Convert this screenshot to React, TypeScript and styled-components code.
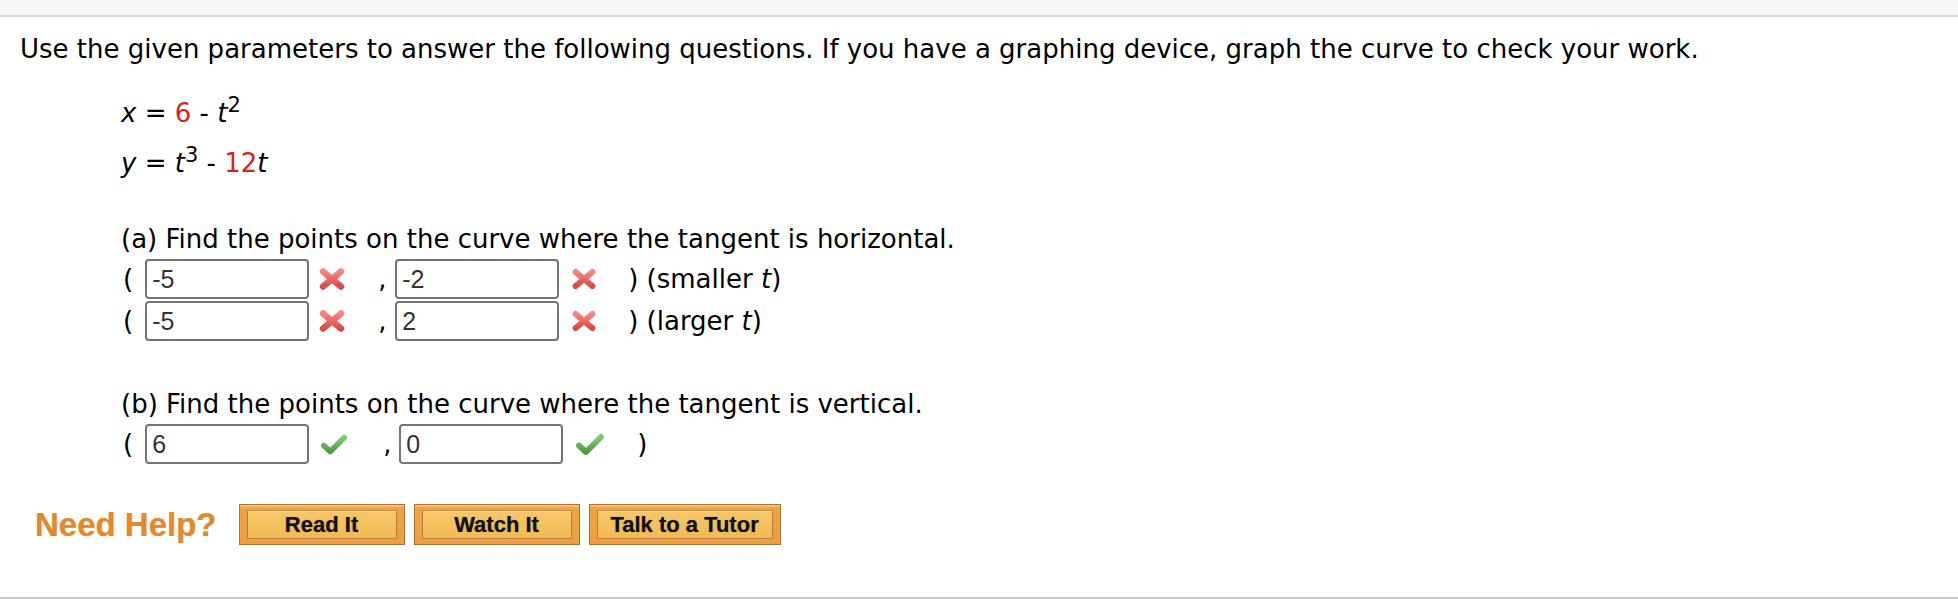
import React from "react";
import styled, { createGlobalStyle } from "styled-components";

const GlobalStyle = createGlobalStyle`
  html, body {
    margin: 0;
    padding: 0;
    background: #ffffff;
  }
  body {
    font-family: "DejaVu Sans", Verdana, sans-serif;
    color: #000;
  }
`;

const Page = styled.div`
  width: 1958px;
  height: 606px;
  background: #fff;
  display: flex;
  flex-direction: column;
`;

const TopBand = styled.div`
  height: 15px;
  background: #f6f6f6;
  border-bottom: 2px solid #dedede;
`;

const Body = styled.div`
  flex: 1;
  padding: 17px 20px 0;
  border-bottom: 2px solid #c9c9c9;
  margin-bottom: 7px;
`;

const Prompt = styled.p`
  margin: 0;
  font-size: 26px;
  line-height: 30px;
`;

const Indented = styled.div`
  padding-left: 101px;
`;

const Equations = styled.div`
  margin-top: 34px;
  display: flex;
  flex-direction: column;
  gap: 20px;
  font-size: 26px;
  line-height: 30px;
`;

const Var = styled.i`
  font-style: italic;
`;

const Red = styled.span`
  color: #d1281c;
`;

const Sup = styled.sup`
  font-size: 21px;
  line-height: 0;
  vertical-align: 10px;
`;

const PartTitle = styled.p<{ $top: number }>`
  margin: ${(p) => p.$top}px 0 4px;
  font-size: 26px;
  line-height: 30px;
`;

const AnswerRow = styled.div`
  display: flex;
  align-items: center;
  height: 42px;
  font-size: 26px;
`;

const Paren = styled.span<{ $ml?: number }>`
  margin-left: ${(p) => p.$ml ?? 0}px;
  white-space: pre;
`;

const Field = styled.div<{ $ml: number }>`
  box-sizing: border-box;
  width: 164px;
  height: 40px;
  margin-left: ${(p) => p.$ml}px;
  border: 2px solid #757575;
  border-radius: 4px;
  padding: 0 5px;
  display: flex;
  align-items: center;
  font-family: "Liberation Sans", Arial, sans-serif;
  font-size: 25px;
  color: #333;
  background: #fff;
`;

const MarkSlot = styled.span<{ $ml: number; $w: number }>`
  display: inline-flex;
  align-items: center;
  margin-left: ${(p) => p.$ml}px;
  width: ${(p) => p.$w}px;
  height: 24px;
`;

const Comma = styled.span<{ $ml: number }>`
  margin-left: ${(p) => p.$ml}px;
  width: 8px;
`;

const HelpBar = styled.div`
  display: flex;
  align-items: center;
  margin-top: 39px;
  margin-left: 15px;
`;

const HelpLabel = styled.span`
  font-family: "Liberation Sans", Arial, sans-serif;
  font-weight: bold;
  font-size: 33px;
  color: #e3882e;
  margin-right: 22px;
  text-shadow: 0 0 1px rgba(227, 136, 46, 0.6);
`;

const HelpButton = styled.button<{ $w: number }>`
  box-sizing: border-box;
  width: ${(p) => p.$w}px;
  height: 41px;
  margin-right: 9px;
  padding: 5px 7px;
  border: 1px solid #a8733a;
  background: linear-gradient(#f7c98a 0, #efa347 3px, #ee9e40 100%);
  cursor: pointer;
  display: flex;
`;

const HelpButtonFace = styled.span`
  flex: 1;
  display: flex;
  align-items: center;
  justify-content: center;
  border: 1px solid #b57d3c;
  border-top-color: #c98a45;
  background: linear-gradient(#f6c86a, #f2ba56);
  font-family: "Liberation Sans", Arial, sans-serif;
  font-weight: bold;
  font-size: 22px;
  color: #111;
  text-shadow: 0 0 1px rgba(0, 0, 0, 0.5);
  box-shadow: inset 0 1px 0 #fbe0a8;
`;

const WrongMark = () => (
  <svg width="28" height="24" viewBox="0 0 28 24">
    <defs>
      <linearGradient id="xg" x1="0" y1="0" x2="0" y2="1">
        <stop offset="0" stopColor="#f58784" />
        <stop offset="1" stopColor="#dc4a46" />
      </linearGradient>
    </defs>
    <g stroke="url(#xg)" strokeWidth="6.5" strokeLinecap="round">
      <line x1="5" y1="4.5" x2="23" y2="19.5" />
      <line x1="23" y1="4.5" x2="5" y2="19.5" />
    </g>
  </svg>
);

const RightMark = () => (
  <svg width="30" height="24" viewBox="0 0 30 24">
    <defs>
      <linearGradient id="cg" x1="0" y1="0" x2="0" y2="1">
        <stop offset="0" stopColor="#86c877" />
        <stop offset="1" stopColor="#4f9a45" />
      </linearGradient>
    </defs>
    <path
      d="M4 13.5 L11 20 L26 5"
      fill="none"
      stroke="url(#cg)"
      strokeWidth="6"
      strokeLinecap="round"
      strokeLinejoin="round"
    />
  </svg>
);

type Answer = { x: string; y: string; ok: boolean; note?: React.ReactNode };

const Row: React.FC<Answer> = ({ x, y, ok, note }) => (
  <AnswerRow>
    <Paren $ml={2}>(</Paren>
    <Field $ml={12}>{x}</Field>
    <MarkSlot $ml={ok ? 11 : 9} $w={28}>
      {ok ? <RightMark /> : <WrongMark />}
    </MarkSlot>
    <Comma $ml={ok ? 35 : 32}>,</Comma>
    <Field $ml={ok ? 8 : 9}>{y}</Field>
    <MarkSlot $ml={12} $w={ok ? 30 : 26}>
      {ok ? <RightMark /> : <WrongMark />}
    </MarkSlot>
    <Paren $ml={ok ? 32 : 31}>){note}</Paren>
  </AnswerRow>
);

const App: React.FC = () => (
  <Page>
    <GlobalStyle />
    <TopBand />
    <Body>
      <Prompt>
        Use the given parameters to answer the following questions. If you have a graphing device, graph the
        curve to check your work.
      </Prompt>
      <Indented>
        <Equations>
          <div>
            <Var>x</Var> = <Red>6</Red> - <Var>t</Var>
            <Sup>2</Sup>
          </div>
          <div>
            <Var>y</Var> = <Var>t</Var>
            <Sup>3</Sup> - <Red>12</Red>
            <Var>t</Var>
          </div>
        </Equations>

        <PartTitle $top={46}>(a) Find the points on the curve where the tangent is horizontal.</PartTitle>
        <Row
          x="-5"
          y="-2"
          ok={false}
          note={
            <>
              {" "}(smaller <Var>t</Var>)
            </>
          }
        />
        <Row
          x="-5"
          y="2"
          ok={false}
          note={
            <>
              {" "}(larger <Var>t</Var>)
            </>
          }
        />

        <PartTitle $top={47}>(b) Find the points on the curve where the tangent is vertical.</PartTitle>
        <Row x="6" y="0" ok />
      </Indented>

      <HelpBar>
        <HelpLabel>Need Help?</HelpLabel>
        <HelpButton $w={166}>
          <HelpButtonFace>Read It</HelpButtonFace>
        </HelpButton>
        <HelpButton $w={166}>
          <HelpButtonFace>Watch It</HelpButtonFace>
        </HelpButton>
        <HelpButton $w={192}>
          <HelpButtonFace>Talk to a Tutor</HelpButtonFace>
        </HelpButton>
      </HelpBar>
    </Body>
  </Page>
);

export default App;
